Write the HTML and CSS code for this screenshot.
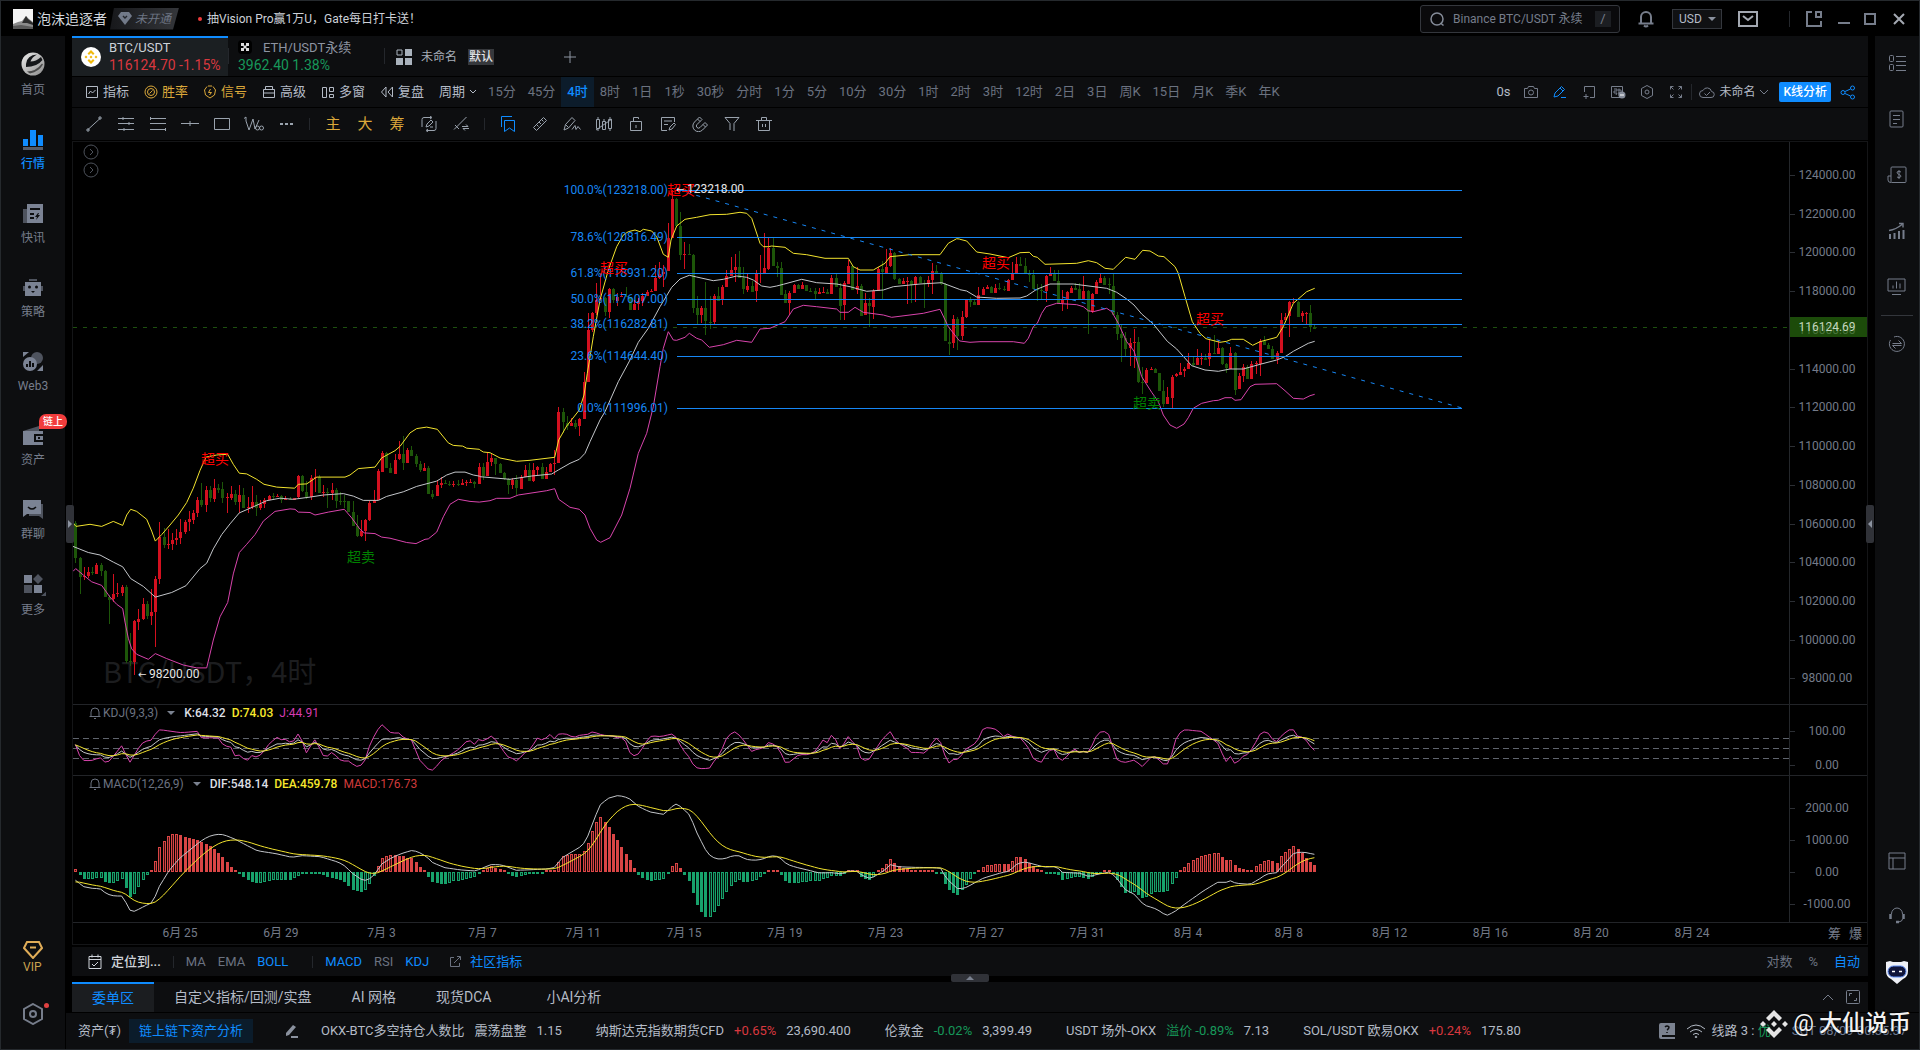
FILE: index.html
```html
<!DOCTYPE html>
<html lang="zh-CN">
<head>
    <meta charset="UTF-8">
    <meta name="viewport" content="width=device-width, initial-scale=1.0">
    <title>BTC/USDT 116124.70</title>
    <link rel="stylesheet" href="styles.css">
</head>
<body>
    <header class="titlebar">
        <svg class="avatar" viewBox="0 0 20 20"><rect width="20" height="20" fill="#f4f4f4"/><path d="M0 20v-5l5-2 4-1 4-5 3 3 4 3v7z" fill="#8b8b8b"/><path d="M9 14l4-7 2 3 5 4v2l-6-2z" fill="#2d2d2d"/><path d="M0 17l8-1 12 2v2H0z" fill="#5a5a5a"/></svg>
        <span class="user-name">泡沫追逐者</span>
        <button class="vip-badge">
            <svg width="14" height="13" viewBox="0 0 14 13"><path d="M3 0h8l3 4-7 9-7-9z" fill="#727a89"/><path d="M5 4l2 2 2-2" fill="none" stroke="#23262c" stroke-width="1.4"/></svg>
            未开通
        </button>
        <a class="notice" href="#">抽Vision Pro赢1万U，Gate每日打卡送！</a>
        <div class="title-tools">
            <label class="search">
                <svg class="icon search-icon" width="16" height="16" viewBox="0 0 16 16"><circle cx="8" cy="8" r="6"/><path d="M11.500 12l3 2.500"/></svg>
                <input type="text" placeholder="Binance BTC/USDT 永续" aria-label="搜索">
                <kbd>/</kbd>
            </label>
            <button class="ic-btn bell-btn" title="通知"><svg class="icon bold" width="16" height="18" viewBox="0 0 16 18"><path d="M3 13V7a5 5 0 0110 0v6M0.500 13.500h15M6 15.500q2 2 4 0"/></svg></button>
            <div class="currency">
                <select aria-label="货币"><option>USD</option></select>
                <svg width="8" height="4" viewBox="0 0 8 4"><path d="M0 0h8L4 4z" fill="#8a919e"/></svg>
            </div>
            <button class="ic-btn mail-btn" title="消息"><svg class="icon bold light" width="20" height="16" viewBox="0 0 20 16"><path d="M1 1h18v14H1zM5 5l5 4 5-4"/></svg></button>
            <i class="sep"></i>
            <button class="ic-btn" title="弹出"><svg class="icon bold" width="16" height="16" viewBox="0 0 16 16"><path d="M6 1H1v14h14v-5M10 1h5v5h-5z"/></svg></button>
            <button class="ic-btn min-btn" title="最小化"><svg class="icon bold" width="12" height="12" viewBox="0 0 12 12"><path d="M0 10h12"/></svg></button>
            <button class="ic-btn" title="最大化"><svg class="icon bold" width="12" height="12" viewBox="0 0 12 12"><path d="M1 1h10v10H1z"/></svg></button>
            <button class="ic-btn close-btn" title="关闭"><svg class="icon bold light" width="12" height="12" viewBox="0 0 12 12"><path d="M1 1l10 10M11 1L1 11"/></svg></button>
        </div>
    </header>

    <div class="layout">
        <nav class="sidebar">
            <a href="#" class="nav-item">
                <svg width="24" height="24" viewBox="0 0 24 24"><defs><linearGradient id="ball" x1="0" y1="0" x2="1" y2="1"><stop offset="0" stop-color="#ececec"/><stop offset="1" stop-color="#8a8a8a"/></linearGradient></defs><circle cx="12" cy="12" r="11.500" fill="url(#ball)"/><path d="M5 12Q6 3 16 2.500 11 5 9.500 9.500 15 9.500 20 5l1.500 3Q16 15 5 15z" fill="#15171a"/><path d="M6 19.500q9 0 15-8l1 1q-4 7-13 9z" fill="#4a4a4a"/></svg>
                <span>首页</span>
            </a>
            <a href="#" class="nav-item active">
                <svg width="20" height="20" viewBox="0 0 20 20"><path d="M0 9h5v7H0zM7 0h6v16H7zM15 5h5v11h-5z" fill="#0f8cff"/><path d="M0 17h20v3H0z" fill="#565c69"/></svg>
                <span>行情</span>
            </a>
            <a href="#" class="nav-item">
                <svg width="20" height="20" viewBox="0 0 20 20"><path d="M0 5h5v14H0z" fill="#4e535e"/><path d="M4 0h16v19H4z" fill="#7b8394"/><path d="M7 4h10v2H7zM7 9h4v2H7zM7 13h4v2H7zM15 9l-3 4h2l-1 3 4-5h-2l1-2z" fill="#0d0e10"/></svg>
                <span>快讯</span>
            </a>
            <a href="#" class="nav-item">
                <svg width="20" height="20" viewBox="0 0 20 20"><path d="M6 1h8v2H6zM0 8h20v5H0z" fill="#4e535e"/><path d="M2 4h16v14H2z" fill="#7b8394"/><circle cx="6.500" cy="9" r="1.500" fill="#0d0e10"/><circle cx="13.500" cy="9" r="1.500" fill="#0d0e10"/><path d="M8 13h4l-2 2z" fill="#0d0e10"/></svg>
                <span>策略</span>
            </a>
            <a href="#" class="nav-item">
                <svg width="20" height="20" viewBox="0 0 20 20"><circle cx="14" cy="6" r="6" fill="#4e535e"/><circle cx="7" cy="12" r="7" fill="#7b8394"/><path d="M0 0h6L0 5zM20 13v6h-6z" fill="#7b8394"/><path d="M3 12h2v3H3zM6 9h2v6H6zM9 11h2v4H9z" fill="#0d0e10"/></svg>
                <span>Web3</span>
            </a>
            <a href="#" class="nav-item">
                <svg width="20" height="20" viewBox="0 0 20 20"><path d="M0 5L16 0v5z" fill="#4e535e"/><path d="M0 5h20v14H0z" fill="#7b8394"/><path d="M11 8h9v8h-9z" fill="#0d0e10"/><path d="M13 10h7v4h-7z" fill="#7b8394"/><path d="M15 11h2v2h-2z" fill="#0d0e10"/></svg>
                <span>资产</span>
                <b class="tag">链上</b>
            </a>
            <a href="#" class="nav-item">
                <svg width="20" height="20" viewBox="0 0 20 20"><path d="M6 14h14v5l-4-3H6z" fill="#4e535e"/><path d="M18 4h2v10h-2z" fill="#4e535e"/><path d="M0 0h18v14H4l-4 3z" fill="#7b8394"/><path d="M5 7q4 4 8 0" fill="none" stroke="#0d0e10" stroke-width="1.600"/></svg>
                <span>群聊</span>
            </a>
            <a href="#" class="nav-item">
                <svg width="26" height="22" viewBox="-3 -1 26 22"><path d="M1 0h8v8H1zM11 10h8v8h-8z" fill="#7b8394"/><path d="M15-1l5 5-5 5-5-5zM1 10h8v8H1zM24 16v5h-6z" fill="#4e535e"/></svg>
                <span>更多</span>
            </a>
            <div class="nav-bottom">
                <a href="#" class="vip">
                    <svg width="20" height="18" viewBox="0 0 20 18"><path d="M4 1h12l3 6-9 10L1 7zM7 6.500h6" fill="none" stroke="#e0ad58" stroke-width="2"/></svg>
                    <span>VIP</span>
                </a>
                <button class="settings" title="设置">
                    <svg class="icon bold" width="20" height="22" viewBox="0 0 20 22"><path d="M10 1l9 5v10l-9 5-9-5V6z"/><circle cx="10" cy="11" r="3"/></svg>
                </button>
            </div>
        </nav>

        <main class="center">
            <div class="tabs">
                <a href="#" class="tab active">
                    <svg width="20" height="20" viewBox="0 0 20 20"><circle cx="10" cy="10" r="10" fill="#fff"/><path d="M10 3l3.500 3.500L12 8l-2-2-2 2-1.500-1.500zM10 17l-3.500-3.500L8 12l2 2 2-2 1.500 1.500zM5 8.500L6.500 10 5 11.500 3.500 10zM15 8.500l1.500 1.500-1.500 1.500-1.500-1.500zM10 8.500l1.500 1.500-1.500 1.500L8.500 10z" fill="#f0b90b"/></svg>
                    <span class="pair"><span>BTC/USDT</span><b class="up">116124.70 -1.15%</b></span>
                </a>
                <i class="sep"></i>
                <a href="#" class="tab eth">
                    <span class="pair"><span><svg width="14" height="14" viewBox="0 0 14 14"><rect width="14" height="14" rx="4" fill="#000"/><path d="M3 3h3v3H3zM8 3h3v3H8zM5.500 5.500h3v3h-3zM3 8h3v3H3zM8 8h3v3H8z" fill="#ddd"/></svg>ETH/USDT永续</span><b class="down">3962.40 1.38%</b></span>
                </a>
                <i class="sep"></i>
                <a href="#" class="tab layout-tab">
                    <svg width="16" height="16" viewBox="0 0 16 16"><path d="M1 1h5v5H1z" fill="none" stroke="#aab3bd"/><path d="M9 0h7v7H9zM0 9h7v7H0zM9 9h7v7H9z" fill="#aab3bd"/></svg>
                    <span>未命名</span>
                    <em>默认</em>
                </a>
                <button class="add-tab" title="新建"><svg class="icon" width="14" height="14" viewBox="0 0 14 14"><path d="M7 1v12M1 7h12"/></svg></button>
            </div>

            <div class="toolbar">
                <div class="tools">
                    <button><svg class="icon" width="14" height="14" viewBox="0 0 14 14"><path d="M1.500 1.500h11v11h-11zM3.500 9l2-3 2 2 3-3"/></svg>指标</button>
                    <button class="gold"><svg class="icon" width="14" height="14" viewBox="0 0 14 14"><circle cx="7" cy="7" r="6"/><circle cx="7" cy="7" r="3.500"/><path d="M5.500 8.500l3-3"/></svg>胜率</button>
                    <button class="gold"><svg class="icon" width="14" height="14" viewBox="0 0 14 14"><path d="M4 1.500L1.500 5l1 5L7 13l4.500-3 1-5L10 1.500M5 1h4M7.500 4L5.500 7.500h3L6.500 10"/></svg>信号</button>
                    <button><svg class="icon" width="14" height="14" viewBox="0 0 14 14"><path d="M1.500 4.500h11v8h-11zM1.500 8h11M3.500 4.500v-3h7v3"/></svg>高级</button>
                    <button><svg class="icon" width="14" height="14" viewBox="0 0 14 14"><path d="M1.500 2.500h4v10h-4zM8.500 2.500h4v4h-4zM8.500 9.500h4v3h-4z"/></svg>多窗</button>
                    <button><svg class="icon" width="14" height="14" viewBox="0 0 14 14"><path d="M6 2L1.500 7 6 12zM12.500 2L8 7l4.500 5z"/></svg>复盘</button>
                    <button class="period">周期<svg class="icon" width="8" height="6" viewBox="0 0 8 6"><path d="M1 1l3 3 3-3"/></svg></button>
                </div>
                <div class="periods">
                    <button>15分</button><button>45分</button><button class="active">4时</button><button>8时</button><button>1日</button><button>1秒</button><button>30秒</button><button>分时</button><button>1分</button><button>5分</button><button>10分</button><button>30分</button><button>1时</button><button>2时</button><button>3时</button><button>12时</button><button>2日</button><button>3日</button><button>周K</button><button>15日</button><button>月K</button><button>季K</button><button>年K</button>
                </div>
                <div class="chart-tools">
                    <span>0s</span>
                    <button class="ic-btn" title="截图"><svg class="icon" width="16" height="14" viewBox="0 0 16 14"><path d="M1.500 3.500h3l1-2h5l1 2h3v9h-13z"/><circle cx="8" cy="7.500" r="2.500"/></svg></button>
                    <button class="ic-btn blue" title="画线"><svg class="icon" width="16" height="14" viewBox="0 0 16 14"><path d="M2 12l1-4 6.500-6.500 3 3L6 11zM8 3l3 3M9 12.500h5"/></svg></button>
                    <button class="ic-btn" title="区域"><svg class="icon" width="16" height="14" viewBox="0 0 16 14"><path d="M3.500 7V1.500h10v11H9M5 9v5M2.500 11.500h5"/></svg></button>
                    <button class="ic-btn" title="弹幕"><svg class="icon" width="16" height="14" viewBox="0 0 16 14"><path d="M1.500 1.500h11v11h-11zM4 4h3v2H4v2h3l-1 2M9 3.500v7M8 5h3v3H8"/><circle cx="12" cy="10" r="3.500" fill="#858c99" stroke="none"/><path d="M10 10h4" stroke="#fff"/></svg></button>
                    <button class="ic-btn" title="设置"><svg class="icon" width="16" height="14" viewBox="0 0 16 14"><path d="M8 .5l5.500 3v7l-5.500 3-5.500-3v-7z"/><circle cx="8" cy="7" r="2"/></svg></button>
                    <button class="ic-btn" title="全屏"><svg class="icon" width="16" height="14" viewBox="0 0 16 14"><path d="M2.500 4.500v-3h3M2.500 1.500l3 3M13.500 4.500v-3h-3M13.500 1.500l-3 3M2.500 9.500v3h3M2.500 12.500l3-3M13.500 9.500v3h-3M13.500 12.500l-3-3"/></svg></button>
                    <i class="sep"></i>
                    <button class="save"><svg class="icon" width="16" height="13" viewBox="0 0 16 13"><path d="M4 11.500a3.500 3.500 0 010-7 4.500 4.500 0 018.500 1A3 3 0 0112 11.500zM5.500 7.500l2 2 3.500-3.500"/></svg>未命名<svg class="icon" width="10" height="7" viewBox="0 0 10 7"><path d="M1 1l4 4 4-4"/></svg></button>
                    <button class="analyse">K线分析</button>
                    <button class="ic-btn blue" title="分享"><svg class="icon" width="16" height="15" viewBox="0 0 16 15"><circle cx="3" cy="7.500" r="2"/><circle cx="12.500" cy="3" r="2"/><circle cx="12.500" cy="12" r="2"/><path d="M5 6.500l5.500-2.500M5 8.500l5.500 2.500"/></svg></button>
                </div>
            </div>

            <div class="drawbar">
                <button title="线段"><svg class="icon" width="16" height="16" viewBox="0 0 16 16"><path d="M2 13.500L14 2.500M1 13h2v2H1zM13 1h2v2h-2z"/></svg></button>
                <button title="平行线"><svg class="icon" width="18" height="16" viewBox="0 0 18 16"><path d="M1 2.500h16M1 7.500h16M1 13.500h16M6 1v3M12 6v3M7 12v3"/></svg></button>
                <button title="通道"><svg class="icon" width="18" height="16" viewBox="0 0 18 16"><path d="M1 2.500h16M1 7.500h16M1 13.500h16M1.500 1v3M16.500 12v3"/></svg></button>
                <button title="水平线"><svg class="icon" width="18" height="16" viewBox="0 0 18 16"><path d="M0 7.500h18M9 5v5"/></svg></button>
                <button title="矩形"><svg class="icon" width="18" height="16" viewBox="0 0 18 16"><path d="M1.500 2.500h15v11h-15z"/></svg></button>
                <button title="波浪"><svg class="icon" width="20" height="16" viewBox="0 0 20 16"><path d="M0 2.500l2-1.500v4M2 5l3 9 4-11 2 10 4-9"/><circle cx="13.500" cy="12" r="2"/><circle cx="17.500" cy="12" r="2"/></svg></button>
                <button title="更多"><svg width="14" height="4" viewBox="0 0 14 4"><path d="M1 1h3v2H1zM6 1h3v2H6zM11 1h3v2h-3z" fill="#9aa3ae"/></svg></button>
                <i class="sep"></i>
                <button class="gold">主</button>
                <button class="gold">大</button>
                <button class="gold">筹</button>
                <button title="连续画线"><svg class="icon" width="16" height="16" viewBox="0 0 16 16"><path d="M1 11V3.500q0-2 2-2h7M9 0l2 1.500L9 3M15 5v7.500q0 2-2 2H6M7 13l-2 1.500L7 16M5 11l1-3 4-4 2 2-4 4zM9 11h3"/></svg></button>
                <button title="吸附"><svg class="icon" width="16" height="16" viewBox="0 0 16 16"><path d="M1 13.500L13.500 1M2 9l4 4"/><path d="M9 10.500h6l-2-2M16 12.500h-6l2 2"/></svg></button>
                <i class="sep"></i>
                <button class="blue" title="书签"><svg class="icon" width="16" height="16" viewBox="0 0 16 16"><path d="M1.500 11V.5H12M4.500 4.500h10v11L9.500 12l-5 3.500z"/></svg></button>
                <button title="测量"><svg class="icon" width="16" height="16" viewBox="0 0 16 16"><path d="M1.500 11.500l10-10 3 3-10 10zM4.500 8.500l2 2M7 6l2 2M9.500 3.500l2 2"/></svg></button>
                <button title="画笔"><svg class="icon" width="18" height="16" viewBox="0 0 18 16"><path d="M1 14l1.500-5.500L9 1.500l3 3L5.500 12zM2.500 8.500l3 3M9 13.500l3-4 1 4 2-3 2.500 3"/></svg></button>
                <button title="K线"><svg class="icon" width="18" height="16" viewBox="0 0 18 16"><path d="M1.500 3.500h3v9h-3zM7.500 5.500h3v8h-3zM13.500 3.500h3v9h-3zM3 1v2M3 13v2M9 3v2M15 1v2M15 13v2M1 14L17 3"/></svg></button>
                <button title="锁定"><svg class="icon" width="14" height="16" viewBox="0 0 14 16"><path d="M1.500 5.500h11v9h-11zM4.500 5V1.500h5V3M7 9v3"/></svg></button>
                <button title="备注"><svg class="icon" width="16" height="16" viewBox="0 0 16 16"><path d="M7 14.500H1.500v-13h13V6M4 5h8M4 8.500h4M9 14l1-3 4-4 1.500 1.500L12 13z"/></svg></button>
                <button title="磁铁"><svg class="icon" width="16" height="16" viewBox="0 0 16 16"><path d="M7.500 1L2.500 6a5.500 5.500 0 008 8l5-5-2.500-2.500-5 5a2 2 0 01-3-3l5-5zM5.500 3l2.500 2.500M11 8.500l2.500 2.500"/></svg></button>
                <button title="筛选"><svg class="icon" width="16" height="16" viewBox="0 0 16 16"><path d="M1 1.500h14l-5 6V15M1 1.500l5 6V14"/></svg></button>
                <button title="删除"><svg class="icon" width="16" height="16" viewBox="0 0 16 16"><path d="M0 4.500h16M2.500 4.500v10h11v-10M5.500 4V1.500h5V4M6.500 8v3M9.500 8v3"/></svg></button>
            </div>

            <section class="chart">
                <div class="pane price-pane">
                    <svg class="plot" id="price-plot"></svg>
                    <svg class="axis" id="price-axis"></svg>
                    <div class="expanders">
                        <button title="展开"><svg class="icon" width="16" height="16" viewBox="0 0 16 16"><circle cx="8" cy="8" r="7"/><path d="M7 5l3 3-3 3"/></svg></button>
                        <button title="展开"><svg class="icon" width="16" height="16" viewBox="0 0 16 16"><circle cx="8" cy="8" r="7"/><path d="M7 5l3 3-3 3"/></svg></button>
                    </div>
                </div>
                <div class="pane kdj-pane">
                    <svg class="plot" id="kdj-plot"></svg>
                    <svg class="axis" id="kdj-axis"></svg>
                    <div class="legend">
                        <svg class="icon" width="12" height="12" viewBox="0 0 12 12"><path d="M2 9.500V5a4 4 0 018 0v4.500M.5 9.500h11M5 11.500h2"/></svg>
                        <span>KDJ(9,3,3)</span>
                        <svg class="caret" width="8" height="4" viewBox="0 0 8 4"><path d="M0 0h8L4 4z" fill="#7b8290"/></svg>
                        <b class="white">K:64.32</b><b class="yellow">D:74.03</b><span class="magenta">J:44.91</span>
                    </div>
                </div>
                <div class="pane macd-pane">
                    <svg class="plot" id="macd-plot"></svg>
                    <svg class="axis" id="macd-axis"></svg>
                    <div class="legend">
                        <svg class="icon" width="12" height="12" viewBox="0 0 12 12"><path d="M2 9.500V5a4 4 0 018 0v4.500M.5 9.500h11M5 11.500h2"/></svg>
                        <span>MACD(12,26,9)</span>
                        <svg class="caret" width="8" height="4" viewBox="0 0 8 4"><path d="M0 0h8L4 4z" fill="#7b8290"/></svg>
                        <b class="white">DIF:548.14</b><b class="yellow">DEA:459.78</b><span class="red">MACD:176.73</span>
                    </div>
                </div>
                <div class="pane time-pane">
                    <svg class="plot" id="time-plot"></svg>
                    <div class="time-tools"><button>筹</button><button>爆</button></div>
                </div>
            </section>

            <div class="indicators">
                <button class="locate"><svg class="icon" width="14" height="15" viewBox="0 0 14 15"><path d="M1 2.500h12v12H1zM1 5.500h12M4 .5v3M10 .5v3M4 10l2 2 4-4"/></svg>定位到...</button>
                <i class="sep"></i>
                <button>MA</button><button>EMA</button><button class="blue">BOLL</button>
                <i class="sep wide"></i>
                <button class="blue">MACD</button><button>RSI</button><button class="blue">KDJ</button>
                <a href="#" class="community"><svg class="icon" width="12" height="12" viewBox="0 0 12 12"><path d="M5 1.500H1.500v9h9V7M5 7l6-6M8 .5h3.500V4"/></svg>社区指标</a>
                <div class="scale"><button>对数</button><button>%</button><button class="blue">自动</button></div>
            </div>

            <div class="bottom-tabs">
                <button class="active">委单区</button><button>自定义指标/回测/实盘</button><button>AI 网格</button><button>现货DCA</button><button class="spaced">小AI分析</button>
                <div class="panel-tools">
                    <button class="ic-btn" title="收起"><svg class="icon" width="12" height="8" viewBox="0 0 12 8"><path d="M1 7l5-5 5 5"/></svg></button>
                    <button class="ic-btn" title="最大化"><svg class="icon" width="14" height="14" viewBox="0 0 14 14"><rect x=".5" y=".5" width="13" height="13" rx="1"/><path d="M3.500 6V3.500H6M10.500 8v2.500H8"/></svg></button>
                </div>
                <button class="grip grip-bottom" title="展开"><svg width="8" height="4" viewBox="0 0 8 4"><path d="M0 4h8L4 0z" fill="#7b8290"/></svg></button>
            </div>

            <button class="grip grip-left" title="展开"><svg width="4" height="8" viewBox="0 0 4 8"><path d="M0 0v8l4-4z" fill="#8c93a0"/></svg></button>
            <button class="grip grip-right" title="展开"><svg width="4" height="8" viewBox="0 0 4 8"><path d="M4 0v8L0 4z" fill="#8c93a0"/></svg></button>
        </main>

        <aside class="rail">
            <button class="ic-btn" title="列表"><svg class="icon" width="18" height="18" viewBox="0 0 18 18"><rect x="1.500" y="1.500" width="4" height="6" rx="1"/><rect x="1.500" y="10.500" width="4" height="6" rx="1"/><path d="M8 2.500h10M8 7.500h10M8 11.500h10M8 16.500h10"/></svg></button>
            <button class="ic-btn" title="订单"><svg class="icon" width="18" height="18" viewBox="0 0 18 18"><rect x="2" y="1" width="13" height="16" rx="1"/><path d="M5 5.500h7M5 9.500h7M5 13.500h4"/></svg></button>
            <button class="ic-btn" title="资金"><svg class="icon" width="20" height="18" viewBox="0 0 20 18"><rect x="4" y="1" width="15" height="15.500" rx="1"/><path d="M4 10H1v4q0 2.500 3 2.500M14 6q-2-1.500-4 0 0 2 2 2.500 2 .5 2 2-2 2-4 .500M12 4v9"/></svg></button>
            <button class="ic-btn" title="趋势"><svg class="icon bold" width="18" height="18" viewBox="0 0 18 18"><path d="M2 17v-5M6.500 17v-6M11 17V9M15.500 17V8"/><path d="M1 8.500q7-1 13-6M11 1.500h4v4" stroke-width="1.400"/></svg></button>
            <button class="ic-btn" title="看板"><svg class="icon" width="20" height="18" viewBox="0 0 20 18"><path d="M1 1h17v12H1zM5 16.500h9M6 10.500v-3M9.500 10.500v-7M13 10.500v-5"/></svg></button>
            <hr>
            <button class="ic-btn" title="兑换"><svg class="icon" width="18" height="18" viewBox="0 0 18 18"><path d="M6 2a7.500 7.500 0 11-3.500 3"/><path d="M4.500 8.500h9l-3-3M13.500 10.500h-9l3 3"/></svg></button>
            <div class="rail-bottom">
                <button class="ic-btn" title="布局"><svg class="icon" width="18" height="18" viewBox="0 0 18 18"><path d="M1 1h16v16H1zM1 6h16M5 6v11"/></svg></button>
                <button class="ic-btn" title="客服"><svg class="icon" width="18" height="18" viewBox="0 0 18 18"><path d="M3.500 8a5.500 6 0 0111 0M14.500 13q0 2.500-4 3"/><path d="M2.500 8v5M15.500 8v5M8 16h3" stroke-width="2.500"/></svg></button>
                <button class="ic-btn" title="AI 助手"><svg width="24" height="24" viewBox="0 0 24 24"><path d="M1 2l4-1 3 1h8l3-1 4 1v9q0 6-5 8l-6 5-6-5q-5-2-5-8z" fill="#eef0f6"/><rect x="3" y="6" width="18" height="11" rx="5.500" fill="#10153a" stroke="#5d8cf5"/><path d="M7 11.500h3M14 11.500h3" stroke="#fff" stroke-width="1.500"/></svg></button>
            </div>
        </aside>

        <footer class="statusbar">
            <span>资产(₮)</span>
            <button class="asset-btn">链上链下资产分析</button>
            <button class="ic-btn edit" title="编辑"><svg width="14" height="14" viewBox="0 0 14 14"><path d="M1 9l7-8 3 2-7 8-3 1zM6 12h7v2H6z" fill="#8a919e"/></svg></button>
            <p><span>OKX-BTC多空持仓人数比</span><span>震荡盘整</span><span>1.15</span></p>
            <p><span>纳斯达克指数期货CFD</span><b class="up">+0.65%</b><span>23,690.400</span></p>
            <p><span>伦敦金</span><b class="down">-0.02%</b><span>3,399.49</span></p>
            <p><span>USDT 场外-OKX</span><b class="down">溢价 -0.89%</b><span>7.13</span></p>
            <p><span>SOL/USDT 欧易OKX</span><b class="up">+0.24%</b><span>175.80</span></p>
            <div class="net">
                <svg width="16" height="16" viewBox="0 0 16 16"><path d="M2 0h14v12H3v2h13v2H2q-2 0-2-2V2q0-2 2-2z" fill="#7b8290"/><path d="M6 4q2-2 4 0 0 2-2 3M8 9v1" fill="none" stroke="#0d0e10" stroke-width="1.500"/></svg>
                <svg class="icon" width="20" height="14" viewBox="0 0 20 14"><path d="M1 5q9-8 18 0M4 8q6-5 12 0M7 10.500q3-2.500 6 0"/><circle cx="10" cy="13" r=".8"/></svg>
                <span>线路 3 : <b class="down">优</b></span>
                <time>SGT 08/09 00:35:37</time>
            </div>
        </footer>
    </div>

    <div class="watermark">
        <svg width="28" height="28" viewBox="0 0 28 28"><path d="M14 0l8 8-3 3-5-5-5 5-3-3zM14 28l-8-8 3-3 5 5 5-5 3 3zM3 11l3 3-3 3-3-3zM25 11l3 3-3 3-3-3zM14 11l3 3-3 3-3-3z" fill="#e4e4e4"/></svg>
        <span>@</span>
        <b>大仙说币</b>
    </div>

    <script src="script.js"></script>
</body>
</html>
```
FILE: styles.css
```css
* {
    box-sizing: border-box;
}

body {
    margin: 0;
    height: 100vh;
    min-width: 1500px;
    display: flex;
    flex-direction: column;
    border: 1px solid #25292d;
    background: #000;
    color: #b4bbc6;
    font: 13px/16px Roboto, "Noto Sans CJK SC", sans-serif;
    overflow: hidden;
    position: relative;
}

a {
    color: inherit;
    text-decoration: none;
}

button {
    margin: 0;
    padding: 0;
    border: none;
    background: none;
    color: inherit;
    font: inherit;
    white-space: nowrap;
    cursor: pointer;
}

svg {
    display: block;
    flex: none;
}

b, em {
    font-weight: 400;
    font-style: normal;
}

.icon {
    fill: none;
    stroke: currentColor;
    stroke-width: 1;
}

.icon.bold {
    stroke-width: 2;
}

.icon.light {
    color: #a3a8b1;
}

.ic-btn {
    color: #767d8b;
}

.up {
    color: #d9383f;
}

.down {
    color: #17985a;
}

.blue, .ic-btn.blue {
    color: #0f8cff !important;
}

.gold {
    color: #dba83a !important;
}

.sep {
    width: 1px;
    height: 16px;
    background: #24272c;
    flex: none;
}

/* Title bar */
.titlebar {
    height: 35px;
    flex: none;
    display: flex;
    align-items: center;
    padding: 0 14px 0 12px;
}

.avatar {
    width: 20px;
    height: 20px;
}

.user-name {
    margin-left: 4px;
    font-size: 14px;
    color: #d3d7dd;
}

.vip-badge {
    display: flex;
    align-items: center;
    gap: 3px;
    height: 22px;
    margin-left: 3px;
    padding: 0 8px;
    background: linear-gradient(90deg, #17181b, #34363a);
    clip-path: polygon(4px 0, 100% 0, calc(100% - 6px) 100%, 0 100%);
    color: #6d7584;
    font-size: 12px;
    font-style: italic;
}

.notice {
    margin-left: 19px;
    font-size: 12px;
    color: #cdd1d8;
}

.notice::before {
    content: "";
    display: inline-block;
    width: 4px;
    height: 4px;
    margin-right: 5px;
    border-radius: 2px;
    background: #ef3b3b;
    vertical-align: middle;
}

.title-tools {
    margin-left: auto;
    display: flex;
    align-items: center;
}

.search {
    display: flex;
    align-items: center;
    width: 200px;
    height: 28px;
    padding: 0 8px;
    border: 1px solid #34373d;
    border-radius: 3px;
    background: #0a0a0c;
    color: #767d8b;
}

.search-icon {
    color: #858c99;
    stroke-width: 1.5px;
}

.search input {
    flex: 1;
    min-width: 0;
    margin-left: 8px;
    padding: 0;
    border: none;
    outline: none;
    background: none;
    color: #b4bbc6;
    font: inherit;
    font-size: 12px;
}

.search input::placeholder {
    color: #767d8b;
}

.search kbd {
    width: 16px;
    background: #1c1e22;
    font: inherit;
    text-align: center;
}

.bell-btn {
    margin: 0 18px;
}

.currency {
    position: relative;
    width: 50px;
    height: 20px;
}

.currency select {
    width: 100%;
    height: 100%;
    padding: 0 6px;
    border: 1px solid #34373d;
    background: #101113;
    color: #b4bbc6;
    font: inherit;
    font-size: 12px;
    appearance: none;
}

.currency svg {
    position: absolute;
    right: 6px;
    top: 8px;
    pointer-events: none;
}

.mail-btn {
    margin: 0 31px 0 16px;
}

.title-tools .sep + .ic-btn {
    margin-left: 16px;
}

.min-btn {
    margin: 0 14px 0 16px;
}

.close-btn {
    margin-left: 17px;
}

/* Page grid */
.layout {
    flex: 1;
    min-height: 0;
    display: grid;
    grid-template-columns: 64px minmax(0, 1fr) 44px;
    grid-template-rows: minmax(0, 1fr) 36px;
    row-gap: 1px;
}

/* Left navigation */
.sidebar {
    grid-row: 1 / 3;
    display: flex;
    flex-direction: column;
    align-items: center;
    gap: 32px;
    padding: 16px 0 24px;
    background: #0d0e10;
    color: #767d8b;
    font-size: 12px;
}

.nav-item {
    position: relative;
    display: flex;
    flex-direction: column;
    align-items: center;
    gap: 6px;
}

.nav-item.active {
    color: #0f8cff;
    font-weight: 500;
}

.nav-item .tag {
    position: absolute;
    left: 18px;
    top: -12px;
    width: 28px;
    border-radius: 7px 7px 7px 0;
    background: #f23d3d;
    color: #fff;
    font-size: 10px;
    font-weight: 500;
    line-height: 15px;
    text-align: center;
}

.nav-bottom {
    margin-top: auto;
    display: flex;
    flex-direction: column;
    align-items: center;
    gap: 28px;
}

.vip {
    color: #c9a24f;
}

.settings {
    position: relative;
}

.settings::after {
    content: "";
    position: absolute;
    right: -6px;
    top: 0;
    width: 5px;
    height: 5px;
    border-radius: 3px;
    background: #e04141;
}

/* Center column */
.center {
    position: relative;
    display: flex;
    flex-direction: column;
    gap: 1px;
    margin: 0 7px;
}

.tabs, .toolbar, .drawbar, .indicators, .bottom-tabs {
    display: flex;
    align-items: center;
    background: #0d0e10;
    flex: none;
}

.tabs {
    height: 40px;
}

.tab {
    display: flex;
    align-items: center;
    height: 100%;
    padding-top: 2px;
    color: #8d94a1;
}

.tab.active {
    width: 156px;
    padding: 0 0 0 9px;
    gap: 8px;
    border-top: 2px solid #0f8cff;
    background: #1b1f22;
    color: #ccd1d8;
}

.pair {
    display: flex;
    flex-direction: column;
}

.pair > span {
    display: flex;
    gap: 11px;
}

.pair b {
    font-size: 14px;
    line-height: 18px;
}

.tab.eth {
    width: 155px;
    padding-left: 9px;
}

.layout-tab {
    gap: 9px;
    width: 172px;
    padding-left: 11px;
    font-size: 12px;
    color: #a8aeb9;
}

.layout-tab em {
    margin-left: 2px;
    padding: 0 1px;
    background: #36383c;
    color: #e2e4e8;
    font-weight: 500;
}

.add-tab {
    margin: 2px 0 0 6px;
    color: #8d94a1;
}

/* Main toolbar */
.toolbar {
    height: 30px;
    padding: 0 12px 0 13px;
}

.tools, .periods, .chart-tools {
    display: flex;
    align-items: center;
    height: 100%;
}

.tools {
    gap: 15px;
}

.tools button {
    display: flex;
    align-items: center;
    gap: 4px;
}

.periods {
    margin-left: 5px;
    color: #6b7280;
}

.periods button {
    height: 100%;
    padding: 0 6px;
}

.periods .active {
    background: #0c1c2b;
    color: #0f8cff;
    font-weight: 500;
}

.chart-tools {
    gap: 13px;
    margin-left: auto;
}

.chart-tools .sep {
    margin: 0 -6px;
}

.save {
    display: flex;
    align-items: center;
    gap: 4px;
    font-size: 12px;
}

.save .icon {
    color: #767d8b;
}

.analyse {
    height: 20px;
    margin: 0 -4px 0 -3px;
    padding: 0 4px;
    border-radius: 2px;
    background: #0f8cff;
    color: #fff;
    font-size: 12px;
    font-weight: 500;
}

/* Drawing toolbar */
.drawbar {
    height: 32px;
    padding-left: 6px;
    color: #9aa3ae;
}

.drawbar button {
    width: 32px;
    height: 32px;
    display: flex;
    align-items: center;
    justify-content: center;
    font-size: 15px;
}

.drawbar .sep {
    height: 12px;
    margin: 0 7px;
}

/* Chart */
.chart {
    flex: 1;
    min-height: 0;
    display: flex;
    flex-direction: column;
    border: 1px solid #141517;
    background: #000;
}

.pane {
    position: relative;
    display: grid;
    grid-template-columns: minmax(0, 1fr) 78px;
}

.pane + .pane {
    border-top: 1px solid #222428;
}

.price-pane {
    flex: 1;
    min-height: 0;
}

.kdj-pane {
    height: 71px;
}

.macd-pane {
    height: 147px;
}

.time-pane {
    height: 22px;
}

.plot, .axis {
    width: 100%;
    height: 100%;
    font-size: 12px;
}

.axis {
    border-left: 1px solid #24272b;
    fill: #747b89;
}

.expanders {
    position: absolute;
    left: 10px;
    top: 2px;
    display: flex;
    flex-direction: column;
    gap: 2px;
    color: #4d525b;
}

.legend {
    position: absolute;
    left: 16px;
    top: 0;
    display: flex;
    align-items: center;
    gap: 9px;
    font-size: 12px;
    color: #6b7280;
}

.legend .icon {
    margin-right: -7px;
}

.legend b {
    font-weight: 500;
}

.legend b + b, .legend b + span {
    margin-left: -3px;
}

.white {
    color: #dcdfe3;
}

.yellow {
    color: #f7e82c;
}

.magenta {
    color: #d63bb0;
}

.red {
    color: #cf3b3b;
}

.time-tools {
    display: flex;
    align-items: center;
    justify-content: flex-end;
    gap: 8px;
    padding-right: 5px;
    color: #767d8b;
}

/* Series */
.candle-up {
    fill: #d3101f;
}

.candle-down {
    fill: #1d5609;
}

.line {
    fill: none;
    stroke-width: 1;
}

.line-upper {
    stroke: #f2e32e;
}

.line-middle {
    stroke: #c3c6ca;
}

.line-lower {
    stroke: #d844ac;
}

.fib {
    stroke: #1787f5;
}

.fib-label {
    fill: #1787f5;
    text-anchor: end;
}

.trend {
    stroke: #1787f5;
    stroke-dasharray: 4 6;
}

.last-line {
    stroke: #1e500f;
    stroke-dasharray: 4 6;
}

.level {
    stroke: #5f646d;
    stroke-dasharray: 6 4;
}

.tick {
    stroke: #2c2f34;
}

.mark-buy, .mark-sell {
    font-size: 14px;
}

.mark-buy {
    fill: #ff0000;
}

.mark-sell {
    fill: #008000;
}

.extreme, .arrow {
    fill: #e6e6e6;
}

.arrow {
    font-family: "DejaVu Sans", sans-serif;
    font-size: 10px;
}

.symbol-mark {
    fill: #1c1d1f;
    font-family: "Noto Sans CJK SC", sans-serif;
    font-size: 29px;
}

.price-tag {
    fill: #1c4b0a;
}

.price-tag-under {
    fill: #47723a;
}

.price-tag-text {
    fill: #c3d6bd;
}

.hist-up {
    stroke: #d94545;
    fill: #d94545;
}

.hist-up.hollow {
    fill: #3a1011;
}

.hist-down {
    stroke: #17a26b;
    fill: #17a26b;
}

.hist-down.hollow {
    fill: #06281b;
}

.date {
    fill: #747b89;
    text-anchor: middle;
}

/* Indicator bar */
.indicators {
    height: 29px;
    margin-top: 1px;
    padding: 0 8px 0 16px;
    color: #6b7280;
}

.indicators button {
    margin-right: 12px;
}

.indicators .locate {
    display: flex;
    align-items: center;
    gap: 9px;
    color: #d0d4da;
    font-weight: 500;
}

.indicators .sep {
    height: 12px;
    margin-right: 12px;
}

.indicators .sep.wide {
    margin: 0 12px;
}

.community {
    display: flex;
    align-items: center;
    gap: 9px;
    margin-left: 8px;
    color: #0f8cff;
}

.community .icon {
    color: #6b7280;
}

.scale {
    margin-left: auto;
    display: flex;
    gap: 16px;
}

.scale button {
    margin: 0;
}

/* Bottom panel tabs */
.bottom-tabs {
    position: relative;
    height: 30px;
    margin-top: 5px;
    font-size: 14px;
}

.bottom-tabs > button {
    height: 100%;
    padding: 0 20px;
}

.bottom-tabs > .active {
    border-top: 2px solid #0f8cff;
    background: #1b1d20;
    color: #0f8cff;
}

.bottom-tabs > .spaced {
    margin-left: 15px;
}

.panel-tools {
    margin-left: auto;
    padding-right: 8px;
    display: flex;
    align-items: center;
    gap: 12px;
}

.grip {
    position: absolute;
    display: flex;
    align-items: center;
    justify-content: center;
    border-radius: 2px;
    background: #303238;
}

.bottom-tabs > .grip-bottom {
    left: 50%;
    top: -8px;
    width: 38px;
    height: 8px;
    margin-left: -19px;
    padding: 0;
}

.grip-left, .grip-right {
    top: calc(50% - 19px);
    width: 8px;
    height: 38px;
}

.grip-left {
    left: -6px;
}

.grip-right {
    right: -6px;
}

/* Right rail */
.rail {
    display: flex;
    flex-direction: column;
    align-items: center;
    gap: 38px;
    padding: 18px 0 28px;
    background: #0d0e10;
}

.rail hr {
    width: 32px;
    height: 1px;
    margin: -19px 0;
    border: none;
    background: #33363c;
    flex: none;
}

.rail-bottom {
    margin-top: auto;
    display: flex;
    flex-direction: column;
    align-items: center;
    gap: 36px;
}

/* Status bar */
.statusbar {
    grid-column: 2 / 4;
    display: flex;
    align-items: center;
    margin-left: 1px;
    padding: 0 12px;
    background: #0d0e10;
    white-space: nowrap;
}

.asset-btn {
    height: 24px;
    margin-left: 8px;
    padding: 0 10px;
    background: #0b1c2b;
    color: #0f8cff;
}

.statusbar .edit {
    margin: 0 22px 0 32px;
}

.statusbar p {
    display: flex;
    gap: 10px;
    margin: 0 0 0 34px;
}

.statusbar .edit + p {
    margin-left: 0;
}

.net {
    display: flex;
    align-items: center;
    gap: 6px;
    margin-left: auto;
}

.net svg + svg {
    margin-left: 5px;
}

.net time {
    margin-left: 15px;
    color: #6f7c95;
}

/* Author watermark over the page */
.watermark {
    position: absolute;
    right: 8px;
    bottom: 10px;
    display: flex;
    align-items: center;
    gap: 5px;
    color: #f2f2f2;
    font-size: 23px;
    line-height: 30px;
    text-shadow: 0 0 2px #000;
    pointer-events: none;
}

.watermark b {
    font-weight: 500;
}
```
FILE: script.js
```js
// Horizontal positions are kept in ticks, three ticks to a pixel
var TICK = 3;
var STEP = 4.2;
var FIRST = 2.4;
// indicator panes use a narrower horizontal unit
var SUB = 2.45;

// close,high,low per bar (high and low are optional), each part with its own vertical scale
var bars = [
    { scale: 2.8, offset: -2, data: '1170,1068,1185 1222,1168,1272 1220,1195,1232 1210,1195,1225 1214,1195,1218 1190,1183 1208,1185,1220 1280,1205 1287,1275,1355 1272,1215,1293 1268,1240,1280 1252,1245,1275 1460,1247,1465 1463,1380,1473 1348,1343,1498 1340,1312,1372 1298,1283,1345 1332,1290,1340 1322,1257,1357 1230,1222,1420 1112,1070,1243 1135,1085,1140 1132,1090,1145 1120,1100,1148 1115,1088,1132 1097,1062,1132 1070,1065,1105 1062,1038,1095 1043,1035,1073 1008,1000,1055 1022,960,1028 980,968,1040 1003,970,1015 973,950,1015 978,963,988 1003,958,1018 1000,988,1043 990,968,1008 1013,980,1022 993,965,1043 1028,975 1027,1000,1045 1013,970,1035 1030,995,1055 1018,1008,1035 1007,1003,1032 997,993 999,988,1008 997,990 1007,993,1015 1005,998,1010 1008,1000 1002 942,937 985,937 998,955,1005 945,938,1008 943,922,985 988,938 985,967,1000 988,975,1032 980,960,1008 1010,975,1030 1010,985,1022 1010,995,1030 1042,1010 1080,1010 1108,1050,1112 1095,1065,1112 1065,1060,1122 1017,1010 1008,980 927,922 875,870 918,873 933,905 895,880 880,843 905,830,925 868,862 885,858 908,880,915 925,900,932 918,905 990,912 997,980,1005 965,955 960,943,975 963,952 964,955,970 962,955,972 965,952,970 960,950 958,952,970 957,948 963,955,975 915,905,965' },
    { scale: 3, offset: 8, data: '978,940,990 935,905 923,910,950 942,925,975 970,940 988,965 1005,985,1032 990,985,1018 1015,975,1035 980,975 960,945 992,938 960,940,998 950,947,975 985,940 965,950 942,938 940,900,975 787,772 818,775,850 827,797,838 818,805 830,810,838 808,805,860 697,667 541,490 490,485,545 450,400,495 445,370 488,440,497 418,415,505 452,415,460 440,430,470 437,425 440,412 480,440 462,450 452,445,480 437,430,468 425,420 423,418 385,345 372,335 365,345,410 265,220 148,120 228,145 315,185,328 313,275,355 315,283 475,312,488 497,437,520 475,468,520 515,397,555 515,437,537 438,432,525 452,412 412,405,465 378,360 360,320 352,312,395 385,303 418,350,430 407,370,428 425,392 373,360,455 370,315,398 355,250 293,265,362 347,260 353,337,383 433,335 460,420 430,422,493 405,402 417,402 405,395 422,405 423,415 433,415,450 427,415 425,410 432,418 385,375 413,373 467,400,512 400,392,510 347,330 420,347 407,350,430 497,402 460,430 470,445,532 423,418,507 358,352 368,333,450 350,298 310,293 388,305 403,385 393,385 392,382,463 403,390,460 380,378,457 398,378 398,390,475 390,378,410 362,340,432 370,345 403,365 575,400 580,530,613 508,495,595 558,500,600 502,482,570 450,446 455,440,470 465,450 435,412 418,410 412,405 430,408 415,403 418,398 422,408 390,388 370,335 343,320 348,320 372,325 375,360,395 417,360 420,403,455 422,403,450 378,375,455 372,350 392,360 460,360 450,420,483 427,422,475 413,408 418,400 448,400 423,378 487,420,552 433,428 397,390 383,370 403,378 407,385,433 495,370 552,485,568 563,525,635 595,545,618 580,565,650 577,537,655 697,560 700,650,730 660,655 657,650 670,655 723,668 762,690,770 742,710 680,675,775 673,668 665,640 658,650,680 640,610 647,620 625,598 623,610,647 628,612 610,570,648 613,555 595,570 643,590 655,640,670 608,592 718,605,735 678,670 650,642,695 687,645 643,632 640,632,672 572,568,680 585,558 597,580 627,588 610,602,640 510,490 500,490 457,452,560 455,445 500,452 490,482,515 488,485,522 530,465,545 535,525' }
];

var boll = [
    { x: -219, scale: 2.8, offset: -2,
      upper: '219,1072 228,1082 270,1076 305,1082 340,1068 368,1079 380,1050 392,1034 410,1040 440,1062 455,1095 466,1123 485,1105 510,1078 535,1050 560,1015 580,975 600,925 618,888 650,882 683,880 700,908 718,933 740,935 770,950 792,964 830,972 884,975 895,964 920,963 950,944 1035,944 1050,938 1075,920 1125,916 1145,890 1185,870 1200,858 1230,820 1250,808 1280,804 1312,810 1345,848 1360,855 1388,857 1400,863 1438,866',
      middle: '219,1138 265,1155 300,1162 340,1182 368,1195 392,1228 430,1250 466,1280 515,1267 558,1248 600,1200 620,1185 640,1145 665,1105 690,1075 718,1044 760,1027 800,1010 840,1003 880,1006 930,1000 970,994 1030,990 1060,997 1090,1009 1135,1009 1160,998 1210,985 1250,970 1310,955 1340,938 1365,930 1395,930 1420,938 1438,941',
      lower: '219,1208 227,1200 250,1218 275,1237 305,1247 330,1280 350,1300 368,1312 375,1350 385,1395 395,1425 410,1440 445,1454 466,1438 500,1452 550,1470 590,1478 620,1478 640,1400 660,1335 683,1295 700,1215 718,1155 740,1132 765,1105 790,1067 825,1040 870,1033 885,1034 895,1042 930,1043 945,1050 985,1042 1033,1034 1055,1058 1080,1090 1093,1100 1125,1102 1145,1112 1170,1115 1220,1127 1248,1130 1275,1118 1285,1117 1310,1098 1330,1055 1350,1020 1375,1006 1410,1012 1438,1014' },
    { x: 1221, scale: 3, offset: 8,
      upper: '0,900 10,906 30,908 60,924 110,934 150,931 224,922 236,870 260,828 298,780 312,735 322,670 340,560 360,450 385,360 410,290 430,255 445,245 465,240 480,245 490,238 515,243 530,260 550,313 565,322 573,270 590,228 615,208 650,202 690,194 740,193 780,187 800,190 815,205 840,280 850,290 865,290 875,288 915,292 940,310 980,314 1035,325 1105,325 1120,350 1140,360 1180,360 1215,340 1230,320 1290,314 1380,314 1405,280 1430,266 1438,267',
      middle: '0,980 90,988 155,978 215,972 235,960 270,940 298,928 315,910 330,875 360,810 375,785 415,695 450,630 475,577 505,535 540,470 575,412 600,387 628,376 650,381 700,392 730,388 770,378 800,382 820,390 845,408 870,412 890,408 910,403 965,388 1010,398 1070,402 1110,410 1160,424 1210,420 1240,410 1320,402 1385,398 1438,418',
      lower: '0,1056 30,1052 50,1045 90,1045 115,1035 200,1022 224,1016 236,1048 270,1072 298,1078 315,1095 330,1135 350,1170 362,1177 390,1163 425,1095 450,1015 475,910 500,850 520,770 540,650 550,595 565,545 580,570 590,571 615,562 628,550 650,565 665,570 688,592 730,584 770,571 815,577 840,537 870,535 915,515 940,477 970,466 1010,470 1070,477 1080,487 1105,487 1125,472 1150,487 1210,495 1235,502 1330,490 1380,478 1405,530 1438,572' },
    { x: 2661, scale: 3, offset: 8,
      upper: '0,268 20,273 50,306 90,312 145,323 180,308 208,307 220,319 232,322 255,343 350,340 385,332 410,338 435,355 460,358 475,343 497,322 525,328 548,301 570,303 595,318 612,320 645,350 655,370 675,440 697,515 720,550 738,566 780,577 800,574 815,568 850,568 878,586 900,575 950,562 970,530 1000,460 1040,425 1064,415',
      middle: '0,419 20,423 50,441 110,445 180,444 200,438 230,418 270,402 340,402 440,415 470,427 500,447 522,465 545,492 580,522 622,574 650,597 695,647 735,660 775,664 810,657 850,657 900,643 950,630 975,620 1000,604 1045,580 1064,574',
      lower: '0,573 30,577 60,575 160,575 193,580 205,565 220,530 232,520 245,490 258,470 290,460 350,464 370,470 385,482 400,485 440,475 455,485 475,520 500,575 522,603 545,680 575,727 595,755 610,795 630,825 650,835 672,822 685,803 700,775 725,760 760,752 775,751 795,743 815,743 825,751 843,749 870,710 885,703 950,701 975,722 1000,745 1030,747 1050,737 1064,733' }
];

var jLine = [
    '180,133 188,185 200,205 207,213 222,211 232,211 240,203 250,204 260,222 270,210 280,195 290,180 300,164 309,196 320,220 331,190 342,170 352,155 372,150 385,123 392,119 425,125 445,128 485,124 490,143 535,144 547,165 558,170 567,172 578,204 588,193 598,208 608,211 620,192 630,204 642,190 652,176 660,160 680,141 690,150 700,148 710,156 721,152 732,128 742,158 752,193 762,165 772,148 782,172 792,197 803,198 815,185 830,208 842,213 855,213 866,224 877,231 888,223 897,205 907,160 925,120 936,104 948,118 958,129 980,129 990,145 1008,150 1018,180 1030,215 1042,227 1052,241 1062,240 1072,225 1083,209 1094,200 1105,193 1125,177 1145,151 1155,153 1163,164 1175,145 1185,154 1203,138 1215,150 1222,162 1232,180 1242,200 1252,203 1266,213 1277,200 1290,183 1300,180 1310,155 1318,142 1330,152 1348,133 1357,147 1370,130 1390,133 1405,143 1420,136 1440,133 1452,125 1475,135 1500,138 1510,143 1522,143 1532,152 1545,194 1556,198 1566,190',
    '0,188 12,160 28,137 50,140 82,131 90,145 105,180 115,192 122,205 133,230 145,236 170,235 185,207 195,195 212,145 225,128 235,125 250,145 265,170 275,187 285,178 300,175 308,170 316,155 330,165 340,175 358,223 370,213 385,197 400,193 412,195 430,183 450,147 460,160 470,133 480,150 490,178 500,160 511,138 520,155 530,165 542,208 555,212 565,205 575,180 585,165 595,145 614,124 625,150 640,165 650,170 665,188 680,187 700,190 715,160 727,143 738,160 748,200 758,221 768,208 782,208 795,180 815,165 825,158 840,117 852,112 875,119 890,140 903,131 915,142 930,142 940,155 955,180 965,210 985,217 997,187 1010,176 1017,180 1027,211 1038,211 1055,185 1067,177 1075,188 1085,183 1097,188 1108,165 1120,133 1130,124 1140,125 1148,133 1158,170 1170,213 1190,217 1212,210 1230,230 1242,215 1255,198 1265,202 1283,223 1292,222 1302,195 1312,150 1325,125 1335,119 1375,124 1390,137 1415,158 1422,180 1438,219 1447,198 1457,220 1468,212 1480,195 1490,193 1505,165 1520,130 1530,125 1540,130 1552,152 1562,156',
    '0,142 20,120 32,118 45,142 55,141 65,152 78,175 85,182'
];

var difLine = [
    '180,566 205,590 225,595 245,596 262,612 280,618 300,618 320,664 330,664 360,645 372,638 380,620 390,590 400,570 415,540 440,505 470,475 490,455 510,440 530,433 548,434 575,447 595,460 630,482 680,492 715,502 740,497 785,500 830,517 845,528 865,552 885,568 895,571 908,565 920,550 935,522 960,503 985,490 1010,481 1025,486 1045,500 1060,518 1090,533 1130,540 1165,543 1190,530 1205,523 1230,525 1265,541 1340,537 1360,532 1375,505 1395,490 1420,472 1435,455 1455,390 1470,345 1490,325 1515,316 1540,324 1566,351',
    '0,352 25,366 58,373 70,360 85,341 95,345 122,375 140,430 165,490 178,502 195,508 210,505 225,498 240,496 260,508 280,511 300,508 320,497 340,500 360,523 380,531 440,549 470,548 495,552 510,543 530,543 545,557 565,566 580,555 600,540 614,523 630,530 670,532 720,533 738,535 750,565 780,598 800,592 840,565 880,550 905,543 925,520 945,516 990,531 1020,530 1035,547 1080,550 1100,560 1120,553 1150,546 1165,560 1190,600 1210,612 1235,645 1265,657 1290,677 1310,665 1335,642 1380,603 1415,577 1440,577 1447,572 1460,580 1495,583 1520,565 1535,552 1560,548',
    '0,535 20,510 30,492 45,487 60,487 85,493'
];

function add(parent, name, attrs, text) {
    var el = document.createElementNS('http://www.w3.org/2000/svg', name);
    for (var key in attrs) {
        el.setAttribute(key, attrs[key]);
    }
    if (text !== undefined) {
        el.textContent = text;
    }
    parent.appendChild(el);
    return el;
}

function parse(str) {
    return str.split(' ').map(function(item) {
        return item.split(',').map(Number);
    });
}

function path(points) {
    return points.map(function(p) {
        return p[0].toFixed(1) + ',' + p[1].toFixed(1);
    }).join(' ');
}

function label(svg, x, y, text, cls) {
    return add(svg, 'text', { x: x, y: y, 'dominant-baseline': 'central', 'class': cls }, text);
}

// Price pane
var price = document.getElementById('price-plot');
label(price, 30, 528, 'BTC/USDT，4时', 'symbol-mark');
add(price, 'line', { x1: 0, y1: 185.5, x2: '100%', y2: 185.5, 'class': 'last-line' });

var index = 0;
var open = 381;
bars.forEach(function(part) {
    parse(part.data).forEach(function(bar) {
        var close = bar[0] / part.scale + part.offset;
        var top = Math.min(open, close);
        var bottom = Math.max(open, close);
        var high = bar[1] ? Math.min(bar[1] / part.scale + part.offset, top) : top;
        var low = bar[2] ? Math.max(bar[2] / part.scale + part.offset, bottom) : bottom;
        var x = Math.round(FIRST + index * STEP);
        var cls = close < open ? 'candle-up' : 'candle-down';
        add(price, 'rect', { x: x, y: Math.round(high), width: 1, height: Math.max(1, Math.round(low - high)), 'class': cls });
        add(price, 'rect', { x: x - 1, y: Math.round(top), width: 3, height: Math.max(1, Math.round(bottom - top)), 'class': cls });
        open = close;
        index++;
    });
});
var count = index;

['upper', 'middle', 'lower'].forEach(function(name) {
    var points = [];
    boll.forEach(function(part) {
        parse(part[name]).forEach(function(p) {
            points.push([(p[0] + part.x) / TICK, p[1] / part.scale + part.offset]);
        });
    });
    add(price, 'polyline', { points: path(points), 'class': 'line line-' + name });
});

[[48, '100.0%(123218.00)'], [95, '78.6%(120816.49)'], [131, '61.8%(118931.20)'], [157, '50.0%(117607.00)'],
 [182, '38.2%(116282.81)'], [214, '23.6%(114644.40)'], [266, '0.0%(111996.01)']].forEach(function(level) {
    add(price, 'line', { x1: 604, y1: level[0] + 0.5, x2: 1389, y2: level[0] + 0.5, 'class': 'fib' });
    label(price, 595, level[0], level[1], 'fib-label');
});
add(price, 'line', { x1: 604, y1: 48, x2: 1389, y2: 266, 'class': 'trend' });

[[128, 317], [527, 126], [594, 48], [909, 121], [1123, 177]].forEach(function(p) {
    label(price, p[0], p[1], '超买', 'mark-buy');
});
[[274, 415], [1060, 261]].forEach(function(p) {
    label(price, p[0], p[1], '超卖', 'mark-sell');
});
label(price, 603, 47, '←', 'arrow');
label(price, 614, 47, '123218.00', 'extreme');
label(price, 65, 532, '←', 'arrow');
label(price, 76, 532, '98200.00', 'extreme');

function axisLabel(svg, y, text) {
    add(svg, 'line', { x1: 0, y1: Math.round(y) + 0.5, x2: 5, y2: Math.round(y) + 0.5, 'class': 'tick' });
    label(svg, 37, y, text).setAttribute('text-anchor', 'middle');
}

var priceAxis = document.getElementById('price-axis');
for (var value = 124000; value >= 98000; value -= 2000) {
    if (value !== 116000) {
        axisLabel(priceAxis, 33 + (124000 - value) / 2000 * 38.73, value.toFixed(2));
    }
}
add(priceAxis, 'rect', { x: -1, y: 175, width: 79, height: 20, 'class': 'price-tag' });
label(priceAxis, 37, 188, '116000.00', 'price-tag-under').setAttribute('text-anchor', 'middle');
label(priceAxis, 37, 185, '116124.69', 'price-tag-text').setAttribute('text-anchor', 'middle');

// Value of a line at every bar
function sample(parts) {
    var points = [];
    parts.forEach(function(part, n) {
        parse(part).forEach(function(p) {
            points.push([(p[0] + n * 1568) / SUB - 73, p[1]]);
        });
    });
    var out = [];
    var k = 0;
    for (var i = 0; i < count; i++) {
        var x = FIRST + i * STEP;
        while (k < points.length - 2 && points[k + 1][0] < x) {
            k++;
        }
        var a = points[k], b = points[k + 1];
        out.push(a[1] + (b[1] - a[1]) * (x - a[0]) / (b[0] - a[0]));
    }
    return out;
}

function drawLine(svg, values, offset, cls) {
    add(svg, 'polyline', {
        points: path(values.map(function(v, i) { return [FIRST + i * STEP, v / TICK + offset]; })),
        'class': 'line ' + cls
    });
}

// KDJ: K and D follow from J
var kdj = document.getElementById('kdj-plot');
[33, 43, 53].forEach(function(y) {
    add(kdj, 'line', { x1: 0, y1: y + 0.5, x2: '100%', y2: y + 0.5, 'class': 'level' });
});
var j = sample(jLine);
var k = [], d = [], prev = 165;
j.forEach(function(v) {
    prev = (6 * prev + v) / 7;
    d.push(prev);
    k.push((v + 2 * prev) / 3);
});
drawLine(kdj, j, -15, 'line-lower');
drawLine(kdj, k, -15, 'line-middle');
drawLine(kdj, d, -15, 'line-upper');
var kdjAxis = document.getElementById('kdj-axis');
axisLabel(kdjAxis, 26, '100.00');
axisLabel(kdjAxis, 60, '0.00');

// MACD: DEA is the 9 period average of DIF
var macd = document.getElementById('macd-plot');
var dif = sample(difLine);
var dea = [], avg = 577, last = 0;
dif.forEach(function(v, i) {
    avg = 0.8 * avg + 0.2 * v;
    dea.push(avg);
    var hist = 2 * (avg - v) / TICK;
    var height = Math.max(1, Math.round(Math.abs(hist)) - 1);
    add(macd, 'rect', {
        x: Math.round(FIRST + i * STEP) - 1 + 0.5,
        y: (hist > 0 ? 95 - height : 96) + 0.5,
        width: 2,
        height: height,
        'class': (hist > 0 ? 'hist-up' : 'hist-down') + (hist > last ? ' hollow' : '')
    });
    last = hist;
});
drawLine(macd, dif, -86, 'line-middle');
drawLine(macd, dea, -86, 'line-upper');
var macdAxis = document.getElementById('macd-axis');
axisLabel(macdAxis, 32, '2000.00');
axisLabel(macdAxis, 64, '1000.00');
axisLabel(macdAxis, 96, '0.00');
axisLabel(macdAxis, 128, '-1000.00');

// Dates, every 24 bars
var time = document.getElementById('time-plot');
['6月 25', '6月 29', '7月 3', '7月 7', '7月 11', '7月 15', '7月 19', '7月 23', '7月 27', '7月 31',
 '8月 4', '8月 8', '8月 12', '8月 16', '8月 20', '8月 24'].forEach(function(text, i) {
    label(time, 107 + i * 24 * STEP, 10, text, 'date');
});
```
